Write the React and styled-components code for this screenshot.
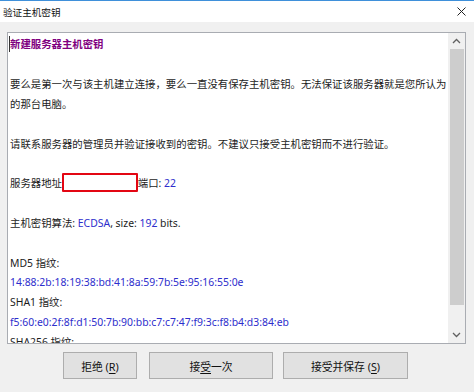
import React from "react";
import styled, { createGlobalStyle } from "styled-components";

const Global = createGlobalStyle`
  html, body { margin: 0; padding: 0; background: #f0f0f0; }
  body { width: 474px; height: 392px; overflow: hidden; font-family: "Noto Sans", "Noto Sans CJK SC", sans-serif; }
`;

const Window = styled.div`
  width: 474px;
  height: 392px;
  display: flex;
  flex-direction: column;
  background: #f0f0f0;
  border-top: 1px solid #3f90da;
  box-sizing: border-box;
`;

const TitleBar = styled.div`
  height: 21px;
  background: #ffffff;
  display: flex;
  align-items: center;
  justify-content: space-between;
  padding: 0 8px 0 3px;
`;

const Title = styled.span`
  font-size: 9.6px;
  color: #111;
  font-family: "Noto Sans CJK SC", sans-serif;
`;

const Close = styled.svg`
  width: 9px;
  height: 9px;
`;

const Body = styled.div`
  padding: 10px 8px 0 7px;
  display: flex;
  flex-direction: column;
`;

const TextBox = styled.div`
  width: 459px;
  height: 312px;
  box-sizing: border-box;
  border: 1px solid #a9acb2;
  background: #ffffff;
  display: flex;
`;

const Content = styled.div`
  flex: 1;
  overflow: hidden;
  padding: 1px 0 0 2px;
  font-size: 10.4px;
  color: #1c1c1c;
  white-space: nowrap;
  position: relative;
`;

const Caret = styled.span`
  position: absolute;
  left: 1px;
  top: 3px;
  width: 1px;
  height: 16px;
  background: #333;
`;

const Line = styled.div`
  height: 19.85px;
  color: ${(p) => (p.$purple ? "#800080" : "inherit")};
  font-weight: ${(p) => (p.$bold ? 700 : 400)};
  display: flex;
  align-items: center;
`;

const Blue = styled.span`
  color: #2d2dcc;
`;

const Redacted = styled.span`
  display: inline-block;
  width: 72px;
  height: 15px;
  margin-left: -3px;
  border: 2.5px solid #e30613;
  border-radius: 1px;
  background: #fff;
`;

const Scrollbar = styled.div`
  width: 17px;
  background: #f0f0f0;
  display: flex;
  flex-direction: column;
  align-items: center;
`;

const Arrow = styled.div`
  height: 16px;
  width: 17px;
  display: flex;
  align-items: center;
  justify-content: center;
`;

const Thumb = styled.div`
  width: 14px;
  height: 256px;
  background: #cdcdcd;
`;

const Spacer = styled.div`
  flex: 1;
`;

const Buttons = styled.div`
  display: flex;
  padding-left: 56px;
  margin-top: 8px;
  gap: 12px;
`;

const Button = styled.button`
  width: ${(p) => p.$w}px;
  height: 27px;
  background: #e1e1e1;
  border: 1px solid #adadad;
  font-family: "Noto Sans", "Noto Sans CJK SC", sans-serif;
  font-size: 10.8px;
  color: #111;
  padding: 0;
  margin-right: ${(p) => p.$mr || 0}px;
  u { text-decoration: underline; text-underline-offset: 2px; }
`;

const Chevron = ({ up }) => (
  <svg width="9" height="6" viewBox="0 0 9 6">
    <path d={up ? "M1 5 L4.5 1.5 L8 5" : "M1 1 L4.5 4.5 L8 1"} fill="none" stroke="#606060" strokeWidth="1.3" />
  </svg>
);

export default function App() {
  return (
    <>
      <Global />
      <Window>
        <TitleBar>
          <Title>验证主机密钥</Title>
          <Close viewBox="0 0 9 9">
            <path d="M0.5 0.5 L8.5 8.5 M8.5 0.5 L0.5 8.5" stroke="#222" strokeWidth="1" />
          </Close>
        </TitleBar>
        <Body>
          <TextBox>
            <Content>
              <Caret />
              <Line $purple $bold>新建服务器主机密钥</Line>
              <Line />
              <Line>要么是第一次与该主机建立连接，要么一直没有保存主机密钥。无法保证该服务器就是您所认为</Line>
              <Line>的那台电脑。</Line>
              <Line />
              <Line>请联系服务器的管理员并验证接收到的密钥。不建议只接受主机密钥而不进行验证。</Line>
              <Line />
              <Line>服务器地址:<Redacted />端口:&nbsp;<Blue>22</Blue></Line>
              <Line />
              <Line>主机密钥算法:&nbsp;<Blue>ECDSA</Blue>, size:&nbsp;<Blue>192</Blue>&nbsp;bits.</Line>
              <Line />
              <Line>MD5 指纹:</Line>
              <Line><Blue>14:88:2b:18:19:38:bd:41:8a:59:7b:5e:95:16:55:0e</Blue></Line>
              <Line>SHA1 指纹:</Line>
              <Line><Blue>f5:60:e0:2f:8f:d1:50:7b:90:bb:c7:c7:47:f9:3c:f8:b4:d3:84:eb</Blue></Line>
              <Line>SHA256 指纹:</Line>
            </Content>
            <Scrollbar>
              <Arrow><Chevron up /></Arrow>
              <Thumb />
              <Spacer />
              <Arrow><Chevron /></Arrow>
            </Scrollbar>
          </TextBox>
          <Buttons>
            <Button $w={74}>拒绝 (<u>R</u>)</Button>
            <Button $w={124} $mr={-2}>接<u>受</u>一次</Button>
            <Button $w={125}>接受并保存 (<u>S</u>)</Button>
          </Buttons>
        </Body>
      </Window>
    </>
  );
}
